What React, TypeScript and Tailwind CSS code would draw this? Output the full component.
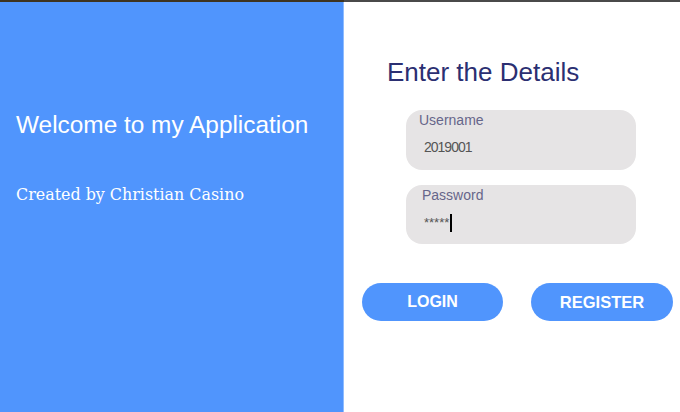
export default function App() {
  return (
    <div className="w-[680px] h-[412px] flex flex-col overflow-hidden bg-white" style={{ fontFamily: '"Liberation Sans", Arial, sans-serif' }}>
      <div className="h-[2px] flex shrink-0">
        <div className="w-[344px] bg-[#3e3420]" />
        <div className="flex-1 bg-[#4a4a4a]" />
      </div>
      <div className="flex-1 flex">
        <div className="w-[344px] bg-[#5095fd] border-r border-[#8fbcff] flex flex-col pl-[16px] pt-[109px]">
          <div className="text-[24.4px] leading-[28px] text-white">Welcome to my Application</div>
          <div className="mt-[44px] text-[15.9px] leading-[24px] text-white" style={{ fontFamily: '"DejaVu Serif", "Liberation Serif", serif' }}>
            Created by Christian Casino
          </div>
        </div>
        <div className="flex-1 flex flex-col pt-[55px]">
          <div className="ml-[43px] text-[26px] leading-[30px] text-[#2b2f72]">Enter the Details</div>
          <div className="ml-[62px] mt-[23px] w-[230px] h-[60px] rounded-[16px] bg-[#e6e4e5] pt-[2px] pl-[13px]">
            <div className="text-[14px] leading-[16px] text-[#66668a]">Username</div>
            <div className="mt-[11px] pl-[5px] text-[14px] leading-[16px] tracking-[-1px] text-[#555]">2019001</div>
          </div>
          <div className="ml-[62px] mt-[15px] w-[230px] h-[59px] rounded-[16px] bg-[#e6e4e5] pt-[2px] pl-[16px]">
            <div className="text-[14px] leading-[16px] text-[#66668a]">Password</div>
            <div className="mt-[10px] pl-[2px] flex items-start h-[20px]">
              <span className="text-[13px] leading-[16px] text-[#555] mt-[2px]">*****</span>
              <span className="w-[2px] h-[18px] bg-black ml-[1px] mt-[1px]" />
            </div>
          </div>
          <div className="ml-[18px] mt-[39px] flex gap-[28px]">
            <button className="w-[141px] h-[38px] rounded-full bg-[#5095fd] text-white font-bold text-[16px]">LOGIN</button>
            <button className="w-[142px] h-[38px] rounded-full bg-[#5095fd] text-white font-bold text-[16.5px]">REGISTER</button>
          </div>
        </div>
      </div>
    </div>
  );
}
